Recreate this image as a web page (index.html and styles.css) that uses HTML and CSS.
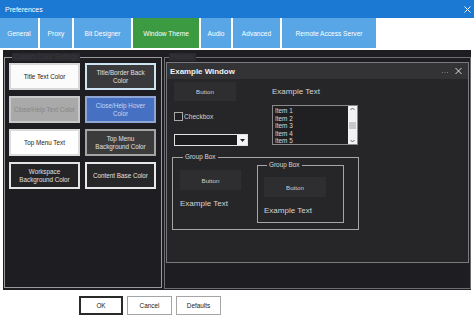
FILE: index.html
```html
<!DOCTYPE html>
<html lang="en">
  <head>
    <meta charset="UTF-8" />
    <meta name="viewport" content="width=device-width, initial-scale=1.0" />
    <title>Preferences</title>
    <link rel="stylesheet" href="styles.css">
  </head>
  <body>
    <div class="titlebar">
      <span class="title">Preferences</span>
      <svg class="close" width="7" height="7" viewBox="0 0 7 7">
        <path d="M0.5 0.5 L6.5 6.5 M6.5 0.5 L0.5 6.5" stroke="#fff" stroke-width="1" />
      </svg>
    </div>

    <div class="tabs">
      <div class="tab tab-general">General</div>
      <div class="tab tab-proxy">Proxy</div>
      <div class="tab tab-bit">Bit Designer</div>
      <div class="tab tab-theme active">Window Theme</div>
      <div class="tab tab-audio">Audio</div>
      <div class="tab tab-advanced">Advanced</div>
      <div class="tab tab-remote">Remote Access Server</div>
    </div>

    <div class="panel">
      <fieldset class="group colors">
        <legend class="dim-legend">Custom Color Settings</legend>
        <div class="color-grid">
          <div class="swatch sw-title-text">Title Text Color</div>
          <div class="swatch sw-title-back">Title/Border Back<br>Color</div>
          <div class="swatch sw-help-text">Close/Help Text Color</div>
          <div class="swatch sw-help-hover">Close/Help Hover<br>Color</div>
          <div class="swatch sw-menu-text">Top Menu Text</div>
          <div class="swatch sw-menu-back">Top Menu<br>Background Color</div>
          <div class="swatch sw-workspace">Workspace<br>Background Color</div>
          <div class="swatch sw-content">Content Base Color</div>
        </div>
      </fieldset>

      <fieldset class="group preview">
        <legend class="dim-legend">Preview</legend>
        <div class="example-window">
          <div class="ew-title">
            <span>Example Window</span>
            <svg class="ew-icons" width="22" height="8" viewBox="0 0 22 8">
              <path d="M1 5.5 h1 M3.5 5.5 h1 M6 5.5 h1" stroke="#777" stroke-width="1" />
              <path d="M14.5 1 L20.5 7 M20.5 1 L14.5 7" stroke="#ddd" stroke-width="1" />
            </svg>
          </div>
          <div class="ew-body">
            <div class="ew-top">
              <div class="ew-left">
                <div class="dark-btn btn-main">Button</div>
                <label class="check"><span class="box"></span>Checkbox</label>
                <div class="combo">
                  <span class="combo-arrow">
                    <svg width="5" height="3" viewBox="0 0 5 3"><path d="M0 0 H5 L2.5 3 Z" fill="#222" /></svg>
                  </span>
                </div>
              </div>
              <div class="ew-right">
                <div class="big-text">Example Text</div>
                <div class="listbox">
                  <ul class="items">
                    <li>Item 1</li>
                    <li>Item 2</li>
                    <li>Item 3</li>
                    <li>Item 4</li>
                    <li>Item 5</li>
                  </ul>
                  <div class="scroll">
                    <svg width="9" height="6" viewBox="0 0 9 6"><path d="M2.5 4 L4.5 2 L6.5 4" stroke="#666" fill="none" /></svg>
                    <span class="thumb"></span>
                    <svg width="9" height="6" viewBox="0 0 9 6"><path d="M2.5 2 L4.5 4 L6.5 2" stroke="#666" fill="none" /></svg>
                  </div>
                </div>
              </div>
            </div>

            <fieldset class="group outer-box">
              <legend>Group Box</legend>
              <div class="gb-col">
                <div class="dark-btn btn-group">Button</div>
                <div class="big-text sample">Example Text</div>
              </div>
              <fieldset class="group inner-box">
                <legend>Group Box</legend>
                <div class="dark-btn btn-inner">Button</div>
                <div class="big-text sample">Example Text</div>
              </fieldset>
            </fieldset>
          </div>
        </div>
      </fieldset>
    </div>

    <div class="actions">
      <button class="action default">OK</button>
      <button class="action">Cancel</button>
      <button class="action">Defaults</button>
    </div>
  </body>
</html>
```

FILE: styles.css
```css
body {
  margin: 0;
  width: 474px;
  height: 322px;
  overflow: hidden;
  background-color: #ffffff;
  font-family: "Liberation Sans", Arial, sans-serif;
}

/* window title */
.titlebar {
  height: 18px;
  background-color: #1b78d3;
  display: flex;
  align-items: center;
  justify-content: space-between;
  padding: 0 3px 0 5px;
}

.title {
  color: #ffffff;
  font-size: 7px;
}

.close {
  display: block;
}

/* tab strip */
.tabs {
  display: flex;
  gap: 2px;
  height: 30px;
  margin-bottom: 2px;
}

.tab {
  display: flex;
  align-items: center;
  justify-content: center;
  background-color: #58a6e6;
  color: #ffffff;
  font-size: 6.6px;
}

.tab.active {
  background-color: #3b9a42;
}

.tab-general { width: 38px; }
.tab-proxy { width: 32px; }
.tab-bit { width: 57px; }
.tab-theme { width: 66px; }
.tab-audio { width: 30px; }
.tab-advanced { width: 47px; }
.tab-remote { width: 94px; }

/* dark body */
.panel {
  margin: 0 3px;
  height: 240px;
  box-sizing: border-box;
  background-color: #1e1d22;
  display: flex;
  gap: 2px;
  padding: 3px 0 0 1px;
  overflow: hidden;
}

.group {
  margin: 0;
  padding: 0;
  border: 1px solid #9a9a9a;
  min-width: 0;
}

.group legend {
  font-size: 6.4px;
  line-height: 8px;
  padding: 0 2px;
  margin-left: 3px;
  color: #d8d8d8;
}

.group .dim-legend {
  color: #3a3a3e;
  background-color: #2b2a30;
}

.colors {
  width: 158px;
  height: 235px;
  box-sizing: border-box;
  padding: 2px 4px 0 4px;
}

.color-grid {
  display: grid;
  grid-template-columns: 71px 71px;
  column-gap: 5px;
  row-gap: 6px;
}

.swatch {
  height: 27px;
  box-sizing: border-box;
  border: 2px solid #d6d6d6;
  display: flex;
  align-items: center;
  justify-content: center;
  text-align: center;
  white-space: nowrap;
  font-size: 6.3px;
  line-height: 8px;
  color: #e0e0e0;
}

.sw-title-text { background-color: #fbfbfb; color: #222; border-color: #d8d8d8; }
.sw-title-back { background-color: #3a3a3c; border-color: #cfe4f2; }
.sw-help-text { background-color: #a9a9a9; border-color: #c9c9c9; color: #858585; }
.sw-help-hover { background-color: #4670c2; border-color: #8fa6d3; color: #c9d6f2; }
.sw-menu-text { background-color: #ffffff; color: #222; border-color: #dcdcdc; }
.sw-menu-back { background-color: #3b3b3c; border-color: #a4a4a4; }
.sw-workspace { background-color: #242427; border-color: #e4e4e4; }
.sw-content { background-color: #272729; border-color: #e8e8e8; }

/* preview */
.preview {
  width: 307px;
  height: 236px;
  box-sizing: border-box;
  padding: 1px 0 0 1px;
  border-color: #6d6d72;
}

.example-window {
  width: 303px;
  height: 201px;
  box-sizing: border-box;
  border: 1px solid #7a7a7e;
  background-color: #262629;
}

.ew-title {
  height: 16px;
  background-color: #333336;
  display: flex;
  align-items: center;
  justify-content: space-between;
  padding: 0 5px 0 3px;
  color: #f2f2f2;
  font-size: 7.9px;
  font-weight: bold;
}

.ew-icons {
  display: block;
}

.ew-body {
  padding: 3px 0 0 5px;
}

.ew-top {
  display: flex;
  margin-left: 2px;
}

.ew-left {
  width: 98px;
}

.dark-btn {
  background-color: #2e2e31;
  color: #cfcfcf;
  font-size: 6.2px;
  display: flex;
  align-items: center;
  justify-content: center;
}

.btn-main {
  width: 62px;
  height: 19px;
}

.check {
  display: flex;
  align-items: center;
  gap: 1px;
  margin-top: 11px;
  height: 9px;
  font-size: 6.6px;
  color: #d0d0d0;
}

.box {
  width: 9px;
  height: 9px;
  box-sizing: border-box;
  border: 1px solid #a8a8a8;
  background-color: #1f1f22;
}

.combo {
  margin-top: 13px;
  width: 74px;
  height: 12px;
  box-sizing: border-box;
  border: 1px solid #e2e2e2;
  background-color: #1c1c1f;
  display: flex;
  justify-content: flex-end;
}

.combo-arrow {
  width: 10px;
  background-color: #f4f4f4;
  display: flex;
  align-items: center;
  justify-content: center;
}

.big-text {
  color: #d4d4d4;
  font-size: 8px;
  line-height: 19px;
}

.listbox {
  margin-top: 4px;
  width: 86px;
  height: 40px;
  box-sizing: border-box;
  border: 1px solid #8a8a8a;
  background-color: #202023;
  display: flex;
}

.items {
  flex: 1;
  margin: 0;
  padding: 1px 0 0 2px;
  list-style: none;
  font-size: 6.4px;
  line-height: 7.5px;
  color: #d8d8d8;
}

.scroll {
  width: 9px;
  background-color: #f2f2f2;
  display: flex;
  flex-direction: column;
  justify-content: space-between;
}

.scroll svg {
  display: block;
}

.thumb {
  height: 7px;
  margin: 0 1px;
  background-color: #c8c8c8;
  flex: none;
}

.outer-box {
  margin-top: 7px;
  width: 187px;
  height: 77px;
  box-sizing: border-box;
  display: flex;
  padding: 0 0 0 7px;
  border-color: #a6a6a6;
}

.gb-col {
  width: 77px;
  padding-top: 9px;
}

.btn-group {
  width: 61px;
  height: 20px;
}

.sample {
  margin-top: 7px;
  line-height: 14px;
}

.inner-box {
  width: 87px;
  height: 62px;
  box-sizing: border-box;
  padding: 8px 0 0 6px;
  border-color: #a6a6a6;
}

.btn-inner {
  width: 62px;
  height: 20px;
}

/* dialog buttons */
.actions {
  display: flex;
  gap: 4px;
  padding: 6px 0 0 79px;
}

.action {
  width: 45px;
  height: 19px;
  margin: 0;
  padding: 0;
  background-color: #ffffff;
  border: 1px solid #a5a5a5;
  font-family: "Liberation Sans", Arial, sans-serif;
  font-size: 6.4px;
  color: #222;
}

.action.default {
  width: 44px;
  border: 2px solid #2a2a2a;
}
```
